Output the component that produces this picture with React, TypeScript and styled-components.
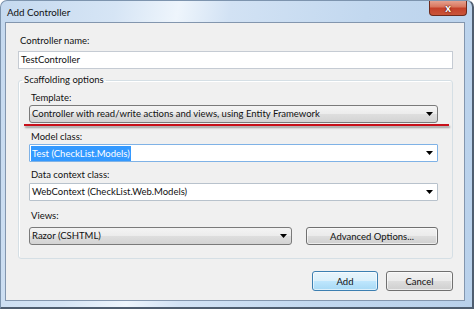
import React from 'react';
import styled, { createGlobalStyle } from 'styled-components';

const GlobalStyle = createGlobalStyle`
  html, body {
    margin: 0;
    padding: 0;
    background: #ffffff;
  }
  * {
    box-sizing: border-box;
  }
`;

const FONT = `Lato, "Noto Sans", Arial, sans-serif`;

const Window = styled.div`
  width: 474px;
  height: 309px;
  display: flex;
  flex-direction: column;
  border-radius: 7px 7px 0 0;
  border-right: 2px solid #4f5e70;
  border-bottom: 2px solid #4f5e70;
  border-left: 1px solid #7d94ae;
  border-top: 1px solid #7d94ae;
  background: linear-gradient(100deg, #c5d9ef 0%, #d6e5f5 22%, #eef5fc 34%, #d2e2f4 44%, #c2d8ef 70%, #b9d1eb 100%);
  font-family: ${FONT};
  font-size: 9.5px;
  color: #111;
  overflow: hidden;
`;

const TitleBar = styled.div`
  height: 21px;
  flex: none;
  display: flex;
  align-items: flex-start;
  justify-content: space-between;
  padding-left: 6px;
`;

const Title = styled.div`
  line-height: 22px;
  font-size: 9.8px;
  color: #111;
`;

const CloseButton = styled.div`
  width: 38px;
  height: 16px;
  margin-top: -1px;
  margin-right: 5px;
  border: 1px solid #6e2a1c;
  border-top: none;
  border-radius: 0 0 4px 4px;
  background: linear-gradient(180deg, #e7a897 0%, #d9775f 45%, #c4412a 55%, #c9553a 100%);
  display: flex;
  align-items: center;
  justify-content: center;
  color: #fff;
  font-weight: bold;
  font-size: 11px;
  line-height: 1;
  text-shadow: 0 0 2px #5a1a10, 0 0 1px #5a1a10;
`;

const Client = styled.div`
  height: 279px;
  flex: none;
  margin: 0 7px 0 4px;
  border: 1px solid #8396ae;
  background: #f0f0f0;
  padding: 11px 11px 0 12px;
  display: flex;
  flex-direction: column;
`;

const Label = styled.div<{ $top?: number; $indent?: number }>`
  line-height: 14px;
  height: 14px;
  margin-top: ${(p) => p.$top ?? 0}px;
  padding-left: ${(p) => p.$indent ?? 2}px;
  white-space: nowrap;
`;

const TextBox = styled.div`
  height: 18px;
  margin-top: 3px;
  border: 1px solid #c5cbd3;
  background: #fff;
  line-height: 16px;
  padding-left: 2px;
`;

const Group = styled.fieldset`
  margin: 4px 0 0 0;
  padding: 0;
  border: 1px solid #d5dfe5;
  border-radius: 3px;
  box-shadow: inset 1px 1px 0 #fff;
  min-width: 0;
`;

const Legend = styled.legend`
  margin-left: 3px;
  padding: 0 2px;
  line-height: 14px;
`;

const GroupBody = styled.div`
  padding: 4px 14px 13px 10px;
  display: flex;
  flex-direction: column;
`;

const Combo = styled.div<{ $kind: 'list' | 'edit' | 'focus'; $top?: number; $grow?: boolean }>`
  height: 18px;
  margin-top: ${(p) => p.$top ?? 0}px;
  display: flex;
  align-items: center;
  justify-content: space-between;
  padding: 0 4px 0 1px;
  border: 1px solid
    ${(p) => (p.$kind === 'list' ? '#7a7a7a' : p.$kind === 'focus' ? '#7fb2e6' : '#b8c2cc')};
  border-radius: ${(p) => (p.$kind === 'list' ? '3px' : '1px')};
  background: ${(p) =>
    p.$kind === 'list'
      ? 'linear-gradient(180deg, #f4f4f4 0%, #ececec 48%, #dedede 52%, #d3d3d3 100%)'
      : '#fff'};
  white-space: nowrap;
  flex: ${(p) => (p.$grow ? '1' : 'none')};
`;

const ComboText = styled.span`
  line-height: 16px;
  padding-left: 1px;
`;

const Selected = styled.span`
  background: #3399ff;
  color: #fff;
  line-height: 15px;
  padding: 0 1px;
`;

const Arrow = () => (
  <svg width="7" height="4" viewBox="0 0 7 4" style={{ flex: 'none' }}>
    <path d="M0 0h7L3.5 4z" fill="#000" />
  </svg>
);

const RedLine = styled.div`
  height: 2px;
  margin: 1px -11px 0 -5px;
  background: #c8101a;
  box-shadow: 1px 2px 2px rgba(0, 0, 0, 0.35);
`;

const Row = styled.div`
  display: flex;
  gap: 14px;
  margin-top: 4px;
`;

const Button = styled.div<{ $width: number; $primary?: boolean }>`
  width: ${(p) => p.$width}px;
  height: 18px;
  flex: none;
  display: flex;
  align-items: center;
  justify-content: center;
  border: 1px solid ${(p) => (p.$primary ? '#3c7fb1' : '#707070')};
  border-radius: 3px;
  background: ${(p) =>
    p.$primary
      ? 'linear-gradient(180deg, #e8f5fc 0%, #dbf0fb 48%, #bee6fd 52%, #a7d9f5 100%)'
      : 'linear-gradient(180deg, #f2f2f2 0%, #ebebeb 48%, #dddddd 52%, #cfcfcf 100%)'};
  box-shadow: inset 0 0 0 1px rgba(255, 255, 255, 0.6);
  white-space: nowrap;
`;

const Footer = styled.div`
  display: flex;
  justify-content: flex-end;
  gap: 8px;
  margin-top: 12px;
`;

const FooterButton = styled(Button)`
  height: 20px;
`;

export default function App() {
  return (
    <>
      <GlobalStyle />
      <Window>
        <TitleBar>
          <Title>Add Controller</Title>
          <CloseButton>x</CloseButton>
        </TitleBar>
        <Client>
          <Label>Controller name:</Label>
          <TextBox>TestController</TextBox>
          <Group>
            <Legend>Scaffolding options</Legend>
            <GroupBody>
              <Label>Template:</Label>
              <Combo $kind="list">
                <ComboText>Controller with read/write actions and views, using Entity Framework</ComboText>
                <Arrow />
              </Combo>
              <RedLine />
              <Label $top={4}>Model class:</Label>
              <Combo $kind="focus">
                <Selected>Test (CheckList.Models)</Selected>
                <Arrow />
              </Combo>
              <Label $top={6}>Data context class:</Label>
              <Combo $kind="edit" $top={1}>
                <ComboText>WebContext (CheckList.Web.Models)</ComboText>
                <Arrow />
              </Combo>
              <Label $top={8}>Views:</Label>
              <Row>
                <Combo $kind="list" $grow>
                  <ComboText>Razor (CSHTML)</ComboText>
                  <Arrow />
                </Combo>
                <Button $width={132}>Advanced Options...</Button>
              </Row>
            </GroupBody>
          </Group>
          <Footer>
            <FooterButton $width={66} $primary>Add</FooterButton>
            <FooterButton $width={67}>Cancel</FooterButton>
          </Footer>
        </Client>
      </Window>
    </>
  );
}
